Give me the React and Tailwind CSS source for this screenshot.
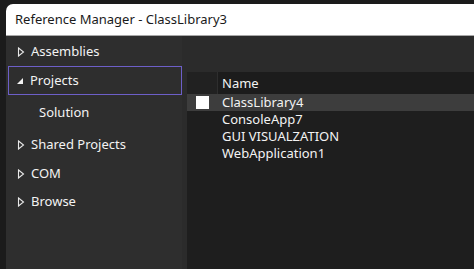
const navItems = [
  { label: 'Assemblies', arrow: 'closed', h: 'h-[29px]' },
  { label: 'Projects', arrow: 'open', active: true },
  { label: 'Solution', child: true, h: 'h-[35px]' },
  { label: 'Shared Projects', arrow: 'closed', h: 'h-[30px]' },
  { label: 'COM', arrow: 'closed', h: 'h-[27px]' },
  { label: 'Browse', arrow: 'closed', h: 'h-[30px]' },
];

const projects = ['ClassLibrary4', 'ConsoleApp7', 'GUI VISUALZATION', 'WebApplication1'];

const Arrow = ({ type }) => {
  if (type === 'open') {
    return (
      <svg width="8" height="8" viewBox="0 0 8 8" className="shrink-0">
        <polygon points="7,1 7,7 1,7" fill="#f2f2f2" />
      </svg>
    );
  }
  return (
    <svg width="8" height="10" viewBox="0 0 8 10" className="shrink-0">
      <polygon points="1.5,1 6.5,5 1.5,9" fill="none" stroke="#e8e8e8" strokeWidth="1.1" />
    </svg>
  );
};

const App = () => {
  return (
    <div
      className="w-[474px] h-[269px] bg-[#1b1b1b] pt-[4px] pl-[6px] overflow-hidden text-[#f3f3f3]"
      style={{ fontFamily: '"Noto Sans", "Open Sans", sans-serif' }}
    >
      <div className="flex flex-col h-full">
        <div className="h-[32px] bg-white rounded-tl-[7px] border-b border-[#a8a8a8] flex items-center pl-[9px] text-[13px] text-[#1a1a1a]">
          Reference Manager - ClassLibrary3
        </div>
        <div className="flex flex-1">
          <div className="w-[176px] bg-[#2e2e2e] pt-[1px] pl-[2px]">
            {navItems.map((item) => (
              <div
                key={item.label}
                className={`flex items-center gap-[6px] text-[13px] ${
                  item.active
                    ? 'h-[29px] border-[1.5px] border-[#6d5fc9] pl-[7px]'
                    : item.child
                    ? `${item.h} pl-[31px]`
                    : `${item.h} pl-[9px]`
                }`}
              >
                {item.arrow && <Arrow type={item.arrow} />}
                <span>{item.label}</span>
              </div>
            ))}
          </div>
          <div className="flex-1 bg-[#2b2b2b] pt-[36px] pl-[5px] flex flex-col">
            <div className="flex-1 bg-[#1e1e1e] flex flex-col">
              <div className="flex h-[22px] bg-[#1c1c1c] text-[13px]">
                <div className="w-[31px] border-r border-[#2e2e2e] bg-[#212121]" />
                <div className="flex items-center pl-[4px] pt-[2px]">Name</div>
              </div>
              {projects.map((name, i) => (
                <div
                  key={name}
                  className={`flex items-center h-[17px] text-[13px] ${i === 0 ? 'bg-[#3d3d3d]' : ''}`}
                >
                  <div className="w-[35px] flex justify-start pl-[9px]">
                    {i === 0 && <div className="w-[13px] h-[13px] bg-white" />}
                  </div>
                  <span className="leading-none">{name}</span>
                </div>
              ))}
            </div>
          </div>
        </div>
      </div>
    </div>
  );
};

export default App;
